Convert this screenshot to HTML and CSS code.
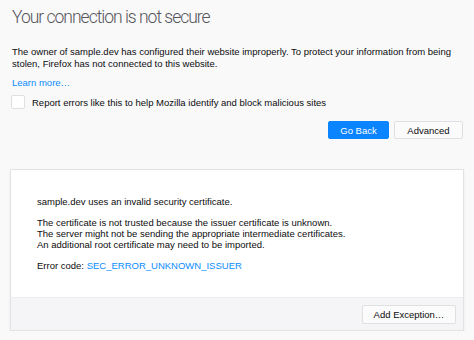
FILE: index.html
```html
<!DOCTYPE html>
<html lang="en">
<head>
  <meta charset="UTF-8" />
  <title>Insecure Connection</title>
  <link rel="stylesheet" href="styles.css">
</head>
<body>
  <main class="error-page">
    <h1 class="title">Your connection is not secure</h1>

    <p class="intro">The owner of sample.dev has configured their website improperly. To protect your information from being stolen, Firefox has not connected to this website.</p>

    <a class="learn-more" href="#">Learn more…</a>

    <label class="report">
      <span class="checkbox"></span>
      Report errors like this to help Mozilla identify and block malicious sites
    </label>

    <div class="button-row">
      <button class="btn primary">Go Back</button>
      <button class="btn advanced">Advanced</button>
    </div>

    <section class="details">
      <div class="details-body">
        <p>sample.dev uses an invalid security certificate.</p>
        <p>The certificate is not trusted because the issuer certificate is unknown.<br>
        The server might not be sending the appropriate intermediate certificates.<br>
        An additional root certificate may need to be imported.</p>
        <p>Error code: <a class="code" href="#">SEC_ERROR_UNKNOWN_ISSUER</a></p>
      </div>
      <div class="details-footer">
        <button class="btn exception">Add Exception…</button>
      </div>
    </section>
  </main>
</body>
</html>
```

FILE: styles.css
```css
body {
  margin: 0;
  background-color: #f9f9fa;
  color: #0c0c0d;
  font-family: 'Liberation Sans', Arial, sans-serif;
  font-size: 9.5px;
}

.error-page {
  padding: 0 10px 0 12px;
}

.title {
  margin: 0;
  padding-top: 6px;
  font-family: 'Roboto', sans-serif;
  font-weight: 300;
  font-size: 17.5px;
  letter-spacing: -1px;
  line-height: 23px;
  color: #55555a;
}

.intro {
  margin: 17px 0 0;
  line-height: 11.5px;
}

.learn-more {
  display: block;
  margin-top: 8px;
  color: #0a8dff;
  text-decoration: none;
  line-height: 11px;
}

.report {
  display: flex;
  align-items: center;
  gap: 7px;
  margin-top: 7px;
}

.checkbox {
  width: 12px;
  height: 12px;
  background-color: #fff;
  border: 1px solid #e0e0e2;
  border-radius: 2px;
  margin-left: -1px;
}

.button-row {
  display: flex;
  justify-content: flex-end;
  gap: 5px;
  margin-top: 12px;
  padding-right: 1px;
}

.btn {
  font-family: 'Liberation Sans', Arial, sans-serif;
  font-size: 9.5px;
  height: 18px;
  padding: 0;
  white-space: nowrap;
  border: 1px solid #e0e0e2;
  border-radius: 2px;
  background-color: #fbfbfb;
  color: #0c0c0d;
}

.btn.primary {
  width: 61px;
  border-color: #0a84ff;
  background-color: #0a84ff;
  color: #fff;
}

.btn.advanced {
  width: 69px;
}

.btn.exception {
  width: 94px;
  height: 19px;
}

.details {
  margin: 30px 0 0 -2px;
  background-color: #fff;
  border: 1px solid #e3e3e6;
  box-shadow: 0 1px 3px rgba(0,0,0,0.06);
}

.details-body {
  padding: 26px 26px 26px;
}

.details-body p {
  margin: 0 0 10px;
  line-height: 11px;
}

.details-body p:last-child {
  margin-bottom: 0;
}

.code {
  color: #0a8dff;
  text-decoration: none;
}

.details-footer {
  display: flex;
  justify-content: flex-end;
  padding: 7px 7px 6px;
  background-color: #f5f5f7;
  border-top: 1px solid #ededf0;
}
```
